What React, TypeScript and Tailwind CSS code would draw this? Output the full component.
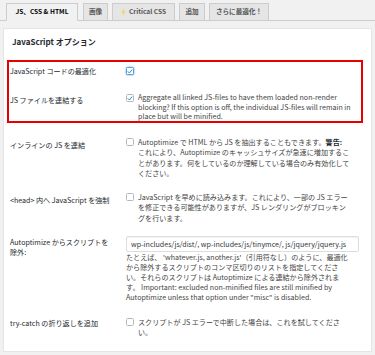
import React from "react";

const font = { fontFamily: '"Noto Sans CJK JP", "Liberation Sans", sans-serif' };

function Box({ checked, focus }: { checked?: boolean; focus?: boolean }) {
  return (
    <div
      className={
        "w-[8px] h-[8px] shrink-0 bg-white rounded-[1.5px] border flex items-center justify-center " +
        (focus
          ? "border-[#5b9dd9] shadow-[0_0_2px_rgba(30,140,190,0.8)]"
          : "border-[#b4b9be]")
      }
    >
      {checked && (
        <svg width="7" height="7" viewBox="0 0 20 20">
          <path d="M3.5 10.5 L8 15 L16.5 4.5" fill="none" stroke="#1e8cbe" strokeWidth="3.2" strokeLinecap="round" strokeLinejoin="round" />
        </svg>
      )}
    </div>
  );
}

function Lines({ lines }: { lines: React.ReactNode[] }) {
  return (
    <div className="leading-[10px] text-[#444]">
      {lines.map((l, i) => (
        <div key={i} className="whitespace-nowrap">
          {l}
        </div>
      ))}
    </div>
  );
}

function Bolt() {
  return (
    <svg width="5" height="8" viewBox="0 0 10 16" className="inline-block mr-[3px] -mt-[1px] align-middle">
      <path d="M6.5 0 L0.5 9 H4.5 L3 16 L9.5 6.5 H5.5 Z" fill="#f4d35e" />
    </svg>
  );
}

export default function App() {
  return (
    <div className="w-[375px] h-[355px] bg-[#f1f1f1] overflow-hidden text-[7.1px] text-[#23282d]" style={font}>
      {/* tabs */}
      <div className="h-[21px] pt-[3px] pl-[6px] flex items-end border-b border-[#ccc]">
        <div className="w-[72px] h-[18px] -mb-px bg-[#f1f1f1] border border-[#ccc] border-b-[#f1f1f1] flex items-center justify-center font-bold text-[6.6px] text-[#000]">
          JS、CSS &amp; HTML
        </div>
        <div className="ml-[5px] w-[25px] h-[17px] bg-[#e5e5e5] border border-[#ccc] border-b-0 flex items-center justify-center font-bold text-[6.6px] text-[#555]">
          画像
        </div>
        <div className="ml-[4px] w-[63px] h-[17px] bg-[#e5e5e5] border border-[#ccc] border-b-0 flex items-center justify-center font-bold text-[6.6px] text-[#555]">
          <Bolt />
          Critical CSS
        </div>
        <div className="ml-[4px] w-[26px] h-[17px] bg-[#e5e5e5] border border-[#ccc] border-b-0 flex items-center justify-center font-bold text-[6.6px] text-[#555]">
          追加
        </div>
        <div className="ml-[4px] w-[60px] h-[17px] bg-[#e5e5e5] border border-[#ccc] border-b-0 flex items-center justify-center font-bold text-[6.6px] text-[#555]">
          さらに最適化！
        </div>
      </div>

      {/* panel */}
      <div className="mt-[7px] mx-[3px] w-[369px] h-[324px] bg-white border border-[#e5e5e5]">
        <div className="h-[31px] pt-[7px] pl-[8px] font-bold text-[8px] leading-[11px] text-[#23282d]">
          JavaScript オプション
        </div>

        {/* red box */}
        <div className="ml-[3px] w-[356px] border-2 border-[#e60000]">
          <div className="h-[27px] pt-[4px] flex">
            <div className="w-[117px] pl-[1px] leading-[10px]">JavaScript コードの最適化</div>
            <div className="mt-[1px]">
              <Box checked focus />
            </div>
          </div>
          <div className="h-[32px] pt-[4px] flex">
            <div className="w-[117px] pl-[1px] leading-[10px] mt-[2px]">JS ファイルを連結する</div>
            <div className="flex gap-[4px]">
              <div className="mt-[1px]">
                <Box checked />
              </div>
              <div className="leading-[9.5px] text-[#444]">
                <div className="whitespace-nowrap">Aggregate all linked JS-files to have them loaded non-render</div>
                <div className="whitespace-nowrap">blocking? If this option is off, the individual JS-files will remain in</div>
                <div className="whitespace-nowrap">place but will be minified.</div>
              </div>
            </div>
          </div>
        </div>

        {/* row 3 */}
        <div className="pt-[14px] flex">
          <div className="w-[122px] pl-[6px] leading-[10px] mt-[2.5px]">インラインの JS を連結</div>
          <div className="flex gap-[4px]">
            <div className="mt-[1px]">
              <Box />
            </div>
            <div className="leading-[10.3px] text-[#444]">
              <div className="whitespace-nowrap">
                Autoptimize で HTML から JS を抽出することもできます。<b className="font-bold text-[#23282d]">警告:</b>
              </div>
              <div className="whitespace-nowrap">これにより、Autoptimize のキャッシュサイズが急速に増加するこ</div>
              <div className="whitespace-nowrap">とがあります。何をしているのか理解している場合のみ有効化して</div>
              <div className="whitespace-nowrap">ください。</div>
            </div>
          </div>
        </div>

        {/* row 4 */}
        <div className="pt-[14px] flex">
          <div className="w-[122px] pl-[6px] leading-[10px] mt-[2.5px] whitespace-nowrap">&lt;head&gt; 内へ JavaScript を強制</div>
          <div className="flex gap-[4px]">
            <div className="mt-[1px]">
              <Box />
            </div>
            <div className="leading-[10.3px] text-[#444]">
              <div className="whitespace-nowrap">JavaScript を早めに読み込みます。これにより、一部の JS エラー</div>
              <div className="whitespace-nowrap">を修正できる可能性がありますが、JS レンダリングがブロッキン</div>
              <div className="whitespace-nowrap">グを行います。</div>
            </div>
          </div>
        </div>

        {/* row 5 */}
        <div className="pt-[13px] flex">
          <div className="w-[122px] pl-[6px] leading-[10px] mt-[1px]">
            <div>Autoptimize からスクリプトを</div>
            <div>除外:</div>
          </div>
          <div className="flex flex-col">
            <div className="w-[233px] h-[16px] border border-[#ddd] rounded-[2px] shadow-[inset_0_1px_1px_rgba(0,0,0,0.05)] flex items-center px-[4px] text-[#32373c] whitespace-nowrap">
              wp-includes/js/dist/, wp-includes/js/tinymce/, js/jquery/jquery.js
            </div>
            <Lines
              lines={[
                "たとえば、 'whatever.js, another.js'（引用符なし）のように、最適化",
                "から除外するスクリプトのコンマ区切りのリストを指定してくださ",
                "い。それらのスクリプトは Autoptimize による連結から除外されま",
                "す。 Important: excluded non-minified files are still minified by",
                'Autoptimize unless that option under "misc" is disabled.',
              ]}
            />
          </div>
        </div>

        {/* row 6 */}
        <div className="pt-[14.5px] flex">
          <div className="w-[122px] pl-[6px] leading-[10px] mt-[1.5px]">try-catch の折り返しを追加</div>
          <div className="flex gap-[4px]">
            <div className="mt-[1px]">
              <Box />
            </div>
            <Lines lines={["スクリプトが JS エラーで中断した場合は、これを試してくださ", "い。"]} />
          </div>
        </div>
      </div>
    </div>
  );
}
